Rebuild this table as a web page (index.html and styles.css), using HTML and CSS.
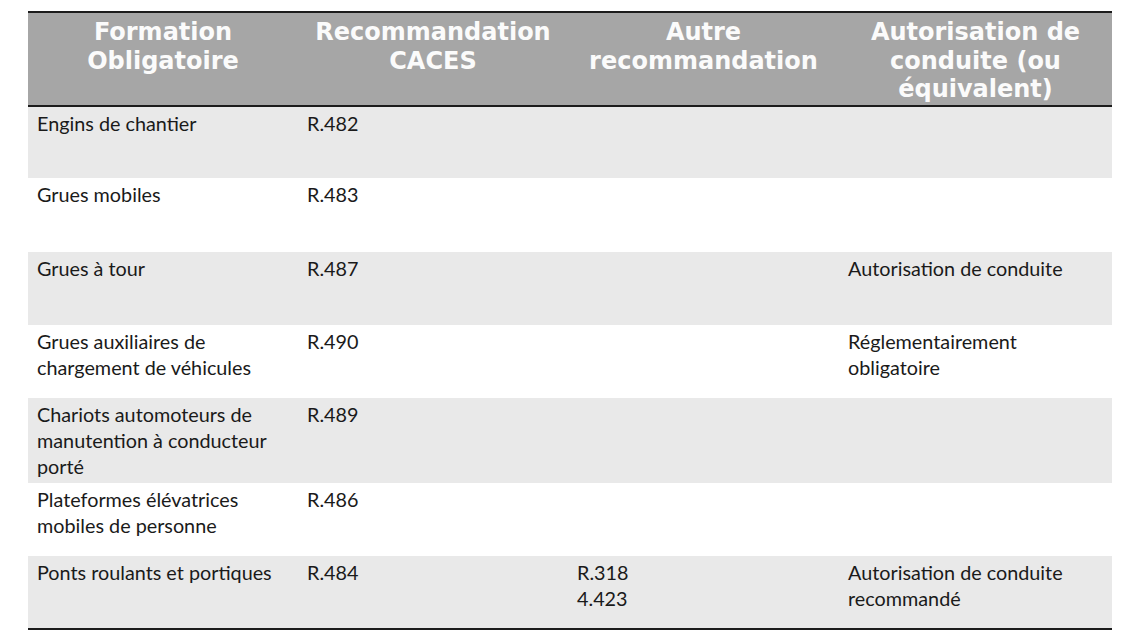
FILE: index.html
```html
<!DOCTYPE html>
<html lang="fr">
<head>
<meta charset="utf-8">
<title>Formation obligatoire</title>
<link rel="stylesheet" href="styles.css">
</head>
<body>
<div class="page">
  <div class="table">
    <div class="head">
      <div class="th">Formation<br>Obligatoire</div>
      <div class="th">Recommandation<br>CACES</div>
      <div class="th">Autre<br>recommandation</div>
      <div class="th">Autorisation de<br>conduite (ou<br>équivalent)</div>
    </div>
    <div class="row shade r1">
      <div class="td">Engins de chantier</div>
      <div class="td">R.482</div>
      <div class="td"></div>
      <div class="td"></div>
    </div>
    <div class="row r2">
      <div class="td">Grues mobiles</div>
      <div class="td">R.483</div>
      <div class="td"></div>
      <div class="td"></div>
    </div>
    <div class="row shade r3">
      <div class="td">Grues à tour</div>
      <div class="td">R.487</div>
      <div class="td"></div>
      <div class="td">Autorisation de conduite</div>
    </div>
    <div class="row r4">
      <div class="td">Grues auxiliaires de<br>chargement de véhicules</div>
      <div class="td">R.490</div>
      <div class="td"></div>
      <div class="td">Réglementairement<br>obligatoire</div>
    </div>
    <div class="row shade r5">
      <div class="td">Chariots automoteurs de<br>manutention à conducteur<br>porté</div>
      <div class="td">R.489</div>
      <div class="td"></div>
      <div class="td"></div>
    </div>
    <div class="row r6">
      <div class="td">Plateformes élévatrices<br>mobiles de personne</div>
      <div class="td">R.486</div>
      <div class="td"></div>
      <div class="td"></div>
    </div>
    <div class="row shade r7">
      <div class="td">Ponts roulants et portiques</div>
      <div class="td">R.484</div>
      <div class="td">R.318<br>4.423</div>
      <div class="td">Autorisation de conduite<br>recommandé</div>
    </div>
  </div>
</div>
</body>
</html>
```

FILE: styles.css
```css
html, body {
  margin: 0;
  padding: 0;
  background: #ffffff;
}

.page {
  padding: 11px 28px 0 28px;
}

.table {
  width: 1084px;
  border-top: 2px solid #1c1c1c;
  border-bottom: 2px solid #1c1c1c;
}

.head, .row {
  display: grid;
  grid-template-columns: 270px 270px 271px 273px;
}

.head {
  background: #a6a6a6;
  height: 92px;
  border-bottom: 2px solid #1c1c1c;
}

.th {
  font-family: "DejaVu Sans", Verdana, sans-serif;
  font-weight: bold;
  font-size: 24px;
  line-height: 28.5px;
  color: #fbfbfb;
  text-align: center;
  padding-top: 5px;
}

.row {
  background: #ffffff;
}

.row.shade {
  background: #e9e9e9;
}

.r1 { height: 71px; }
.r2 { height: 74px; }
.r3 { height: 73px; }
.r4 { height: 73px; }
.r5 { height: 85px; }
.r6 { height: 73px; }
.r7 { height: 72px; }

.td {
  font-family: Lato, "Liberation Sans", sans-serif;
  font-size: 19.8px;
  line-height: 26px;
  color: #1a1a1a;
  padding: 3px 0 0 9px;
}
```
